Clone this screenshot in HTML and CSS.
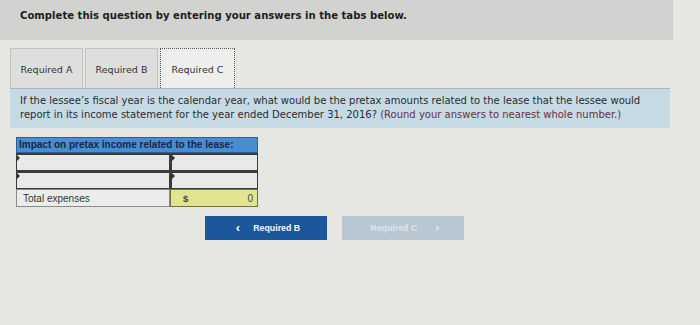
FILE: index.html
```html
<!DOCTYPE html>
<html>
<head>
<meta charset="utf-8">
<link rel="stylesheet" href="styles.css">
</head>
<body>
<div class="page">
  <div class="header">Complete this question by entering your answers in the tabs below.</div>
  <div class="tabs">
    <div class="tab">Required A</div>
    <div class="tab">Required B</div>
    <div class="tab active">Required C</div>
  </div>
  <div class="panel">
    <div class="line">If the lessee’s fiscal year is the calendar year, what would be the pretax amounts related to the lease that the lessee would</div>
    <div class="line"><span>report in its income statement for the year ended December 31, 2016?</span> <span class="note">(Round your answers to nearest whole number.)</span></div>
  </div>
  <div class="grid">
    <div class="ghead">Impact on pretax income related to the lease:</div>
    <div class="cell in left"><span class="mark"></span></div>
    <div class="cell in right"><span class="mark"></span></div>
    <div class="cell in left"><span class="mark"></span></div>
    <div class="cell in right"><span class="mark"></span></div>
    <div class="cell label">Total expenses</div>
    <div class="cell total"><span>$</span><span class="zero">0</span></div>
  </div>
  <div class="nav">
    <div class="btn prev"><span class="chev">&lsaquo;</span><span>Required B</span></div>
    <div class="btn next"><span>Required C</span><span class="chev">&rsaquo;</span></div>
  </div>
</div>
</body>
</html>
```
FILE: styles.css
```css
html, body {
  margin: 0;
  padding: 0;
}
body {
  background: #e6e6e3;
  width: 700px;
  height: 325px;
  overflow: hidden;
  font-family: "DejaVu Sans", Verdana, sans-serif;
  color: #2e2e2e;
}
.page {
  display: flex;
  flex-direction: column;
  align-items: flex-start;
}
.header {
  box-sizing: border-box;
  width: 673px;
  height: 40px;
  background: #d2d2d0;
  padding: 10px 0 0 20px;
  font-weight: bold;
  font-size: 10.1px;
  color: #1e1e1e;
}
.tabs {
  display: flex;
  gap: 2px;
  margin: 8px 0 0 10px;
}
.tab {
  box-sizing: border-box;
  height: 40px;
  width: 73px;
  border: 1px solid #c2c2c0;
  border-bottom: none;
  background: #dededc;
  font-size: 9.5px;
  display: flex;
  align-items: center;
  justify-content: center;
  padding-top: 2px;
  color: #333;
}
.tab.active {
  width: 75px;
  background: #eeeeec;
  border: 1px dotted #555;
  border-bottom: none;
}
.panel {
  box-sizing: border-box;
  width: 660px;
  height: 40px;
  margin-left: 10px;
  background: #c6dae4;
  border-top: 1px solid #a8b8c0;
  padding: 5px 8px 0 10px;
  font-size: 10px;
  line-height: 14px;
  color: #2c2c2c;
  white-space: nowrap;
}
.note {
  color: #6a3040;
}
.grid {
  display: grid;
  grid-template-columns: 154px 88px;
  grid-template-rows: 16px 18px 18px 18px;
  margin: 9px 0 0 16px;
  font-family: "Liberation Sans", Arial, sans-serif;
}
.ghead {
  grid-column: 1 / 3;
  background: #4a8cd0;
  border: 1px solid #2d5f94;
  color: #14284a;
  font-weight: bold;
  font-size: 10px;
  padding: 1px 2px;
  box-sizing: border-box;
}
.cell {
  box-sizing: border-box;
  position: relative;
}
.cell.in {
  background: #e9eae8;
  border: 1.5px solid #3a3a3a;
  border-top-width: 2px;
}
.cell.in.right {
  border-left-width: 2px;
}
.mark {
  position: absolute;
  left: 0;
  top: 0;
  width: 0;
  height: 0;
  border-top: 3px solid transparent;
  border-bottom: 3px solid transparent;
  border-left: 3px solid #333;
}
.cell.label {
  background: #ecedeb;
  border: 1px solid #8a8a8a;
  font-size: 10px;
  padding: 3px 0 0 6px;
  color: #333;
}
.cell.total {
  background: #e3e48e;
  border: 1px solid #6f6f40;
  display: flex;
  justify-content: space-between;
  padding: 3px 4px 0 12px;
  font-size: 9.5px;
  font-weight: bold;
  color: #444;
}
.zero {
  font-weight: normal;
  font-size: 10px;
}
.nav {
  display: flex;
  gap: 15px;
  margin: 9px 0 0 205px;
}
.btn {
  box-sizing: border-box;
  width: 122px;
  height: 24px;
  display: flex;
  align-items: center;
  justify-content: center;
  font-family: "Liberation Sans", Arial, sans-serif;
  font-weight: bold;
  font-size: 8.8px;
}
.btn.prev {
  background: #1c579d;
  color: #f4f6fa;
  gap: 13px;
  padding-left: 4px;
}
.btn.next {
  background: #b8c7d2;
  color: #dde4ea;
  gap: 18px;
  padding-left: 4px;
}
.chev {
  font-size: 13px;
  line-height: 1;
  margin-top: -2px;
}
```
